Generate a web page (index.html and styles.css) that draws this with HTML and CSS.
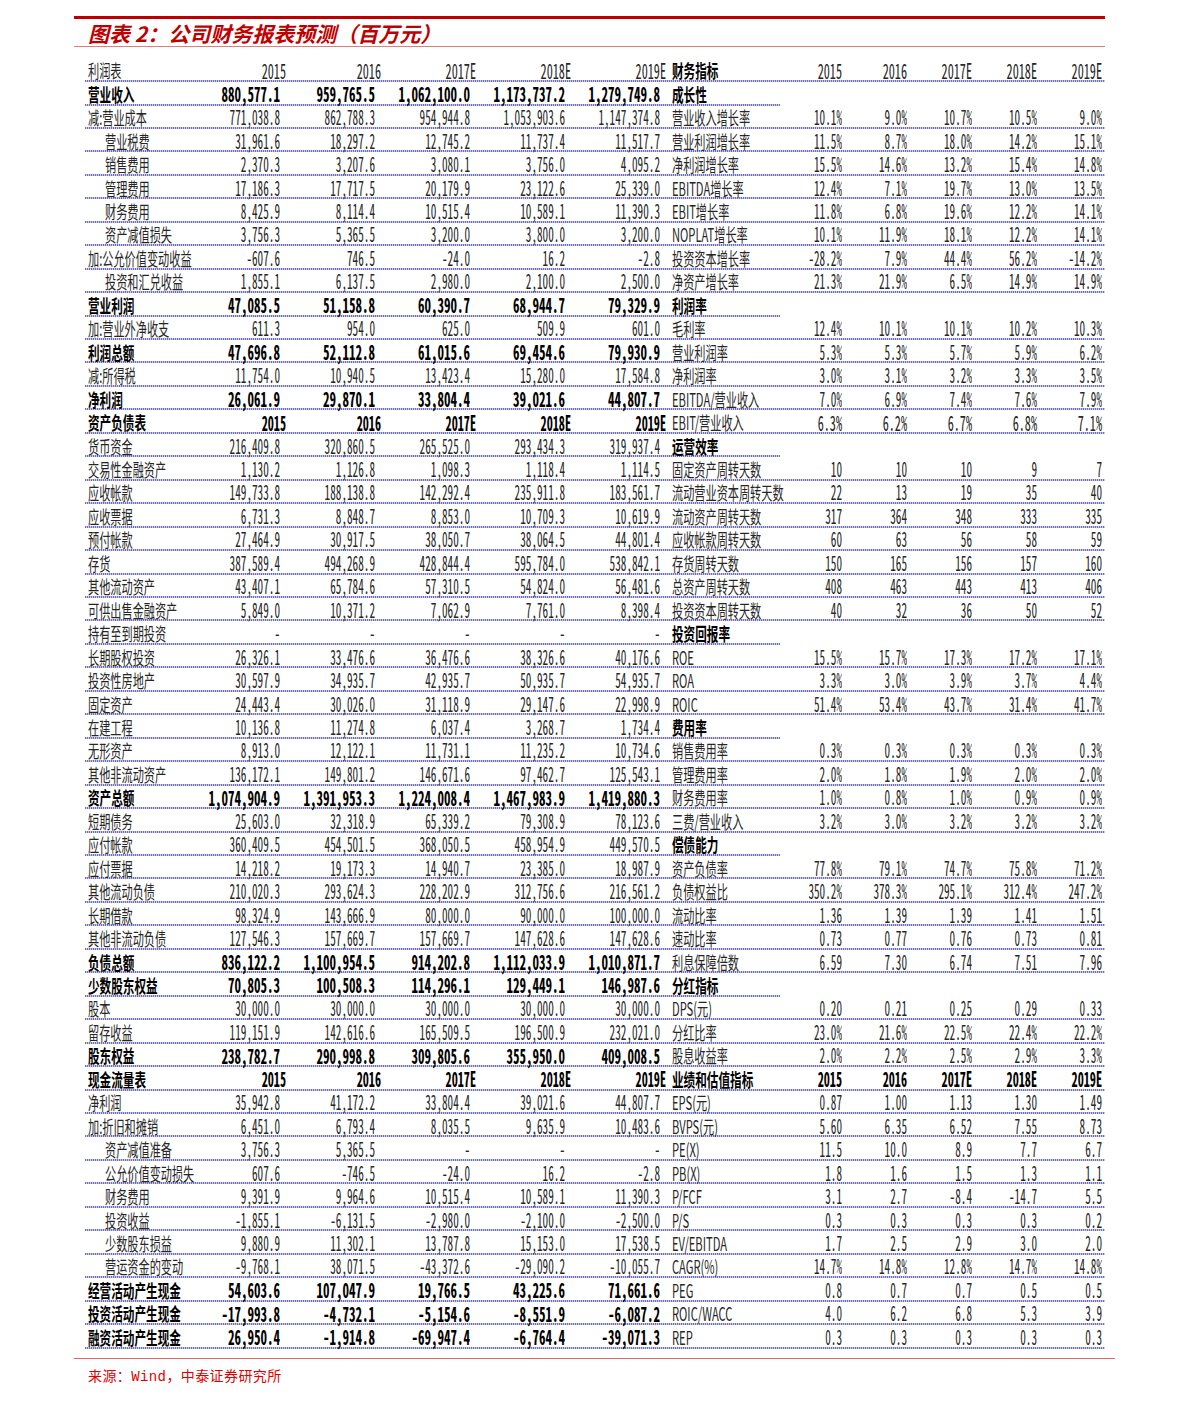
FILE: index.html
```html
<!DOCTYPE html>
<html lang="zh-CN">
<head>
<meta charset="utf-8">
<title>公司财务报表预测</title>
<link rel="stylesheet" href="styles.css">
</head>
<body>
<div class="page">
  <div class="topline"></div>
  <div class="title">图表 2：公司财务报表预测（百万元）</div>
  <div class="sheet">
    <div class="r h"><div class="l">利润表</div><div class="v">2015</div><div class="v">2016</div><div class="v">2017E</div><div class="v">2018E</div><div class="v">2019E</div><div class="rl k">财务指标</div><div class="rv">2015</div><div class="rv">2016</div><div class="rv">2017E</div><div class="rv">2018E</div><div class="rv">2019E</div></div>
    <div class="r b s"><div class="l">营业收入</div><div class="v">880,577.1</div><div class="v">959,765.5</div><div class="v">1,062,100.0</div><div class="v">1,173,737.2</div><div class="v">1,279,749.8</div><div class="rl k">成长性</div></div>
    <div class="r"><div class="l">减:营业成本</div><div class="v">771,038.8</div><div class="v">862,788.3</div><div class="v">954,944.8</div><div class="v">1,053,903.6</div><div class="v">1,147,374.8</div><div class="rl">营业收入增长率</div><div class="rv">10.1%</div><div class="rv">9.0%</div><div class="rv">10.7%</div><div class="rv">10.5%</div><div class="rv">9.0%</div></div>
    <div class="r"><div class="l i">营业税费</div><div class="v">31,961.6</div><div class="v">18,297.2</div><div class="v">12,745.2</div><div class="v">11,737.4</div><div class="v">11,517.7</div><div class="rl">营业利润增长率</div><div class="rv">11.5%</div><div class="rv">8.7%</div><div class="rv">18.0%</div><div class="rv">14.2%</div><div class="rv">15.1%</div></div>
    <div class="r"><div class="l i">销售费用</div><div class="v">2,370.3</div><div class="v">3,207.6</div><div class="v">3,080.1</div><div class="v">3,756.0</div><div class="v">4,095.2</div><div class="rl">净利润增长率</div><div class="rv">15.5%</div><div class="rv">14.6%</div><div class="rv">13.2%</div><div class="rv">15.4%</div><div class="rv">14.8%</div></div>
    <div class="r"><div class="l i">管理费用</div><div class="v">17,186.3</div><div class="v">17,717.5</div><div class="v">20,179.9</div><div class="v">23,122.6</div><div class="v">25,339.0</div><div class="rl">EBITDA增长率</div><div class="rv">12.4%</div><div class="rv">7.1%</div><div class="rv">19.7%</div><div class="rv">13.0%</div><div class="rv">13.5%</div></div>
    <div class="r"><div class="l i">财务费用</div><div class="v">8,425.9</div><div class="v">8,114.4</div><div class="v">10,515.4</div><div class="v">10,589.1</div><div class="v">11,390.3</div><div class="rl">EBIT增长率</div><div class="rv">11.8%</div><div class="rv">6.8%</div><div class="rv">19.6%</div><div class="rv">12.2%</div><div class="rv">14.1%</div></div>
    <div class="r"><div class="l i">资产减值损失</div><div class="v">3,756.3</div><div class="v">5,365.5</div><div class="v">3,200.0</div><div class="v">3,800.0</div><div class="v">3,200.0</div><div class="rl">NOPLAT增长率</div><div class="rv">10.1%</div><div class="rv">11.9%</div><div class="rv">18.1%</div><div class="rv">12.2%</div><div class="rv">14.1%</div></div>
    <div class="r"><div class="l">加:公允价值变动收益</div><div class="v">-607.6</div><div class="v">746.5</div><div class="v">-24.0</div><div class="v">16.2</div><div class="v">-2.8</div><div class="rl">投资资本增长率</div><div class="rv">-28.2%</div><div class="rv">7.9%</div><div class="rv">44.4%</div><div class="rv">56.2%</div><div class="rv">-14.2%</div></div>
    <div class="r"><div class="l i">投资和汇兑收益</div><div class="v">1,855.1</div><div class="v">6,137.5</div><div class="v">2,980.0</div><div class="v">2,100.0</div><div class="v">2,500.0</div><div class="rl">净资产增长率</div><div class="rv">21.3%</div><div class="rv">21.9%</div><div class="rv">6.5%</div><div class="rv">14.9%</div><div class="rv">14.9%</div></div>
    <div class="r b s"><div class="l">营业利润</div><div class="v">47,085.5</div><div class="v">51,158.8</div><div class="v">60,390.7</div><div class="v">68,944.7</div><div class="v">79,329.9</div><div class="rl k">利润率</div></div>
    <div class="r"><div class="l">加:营业外净收支</div><div class="v">611.3</div><div class="v">954.0</div><div class="v">625.0</div><div class="v">509.9</div><div class="v">601.0</div><div class="rl">毛利率</div><div class="rv">12.4%</div><div class="rv">10.1%</div><div class="rv">10.1%</div><div class="rv">10.2%</div><div class="rv">10.3%</div></div>
    <div class="r b"><div class="l">利润总额</div><div class="v">47,696.8</div><div class="v">52,112.8</div><div class="v">61,015.6</div><div class="v">69,454.6</div><div class="v">79,930.9</div><div class="rl">营业利润率</div><div class="rv">5.3%</div><div class="rv">5.3%</div><div class="rv">5.7%</div><div class="rv">5.9%</div><div class="rv">6.2%</div></div>
    <div class="r"><div class="l">减:所得税</div><div class="v">11,754.0</div><div class="v">10,940.5</div><div class="v">13,423.4</div><div class="v">15,280.0</div><div class="v">17,584.8</div><div class="rl">净利润率</div><div class="rv">3.0%</div><div class="rv">3.1%</div><div class="rv">3.2%</div><div class="rv">3.3%</div><div class="rv">3.5%</div></div>
    <div class="r b"><div class="l">净利润</div><div class="v">26,061.9</div><div class="v">29,870.1</div><div class="v">33,804.4</div><div class="v">39,021.6</div><div class="v">44,807.7</div><div class="rl">EBITDA/营业收入</div><div class="rv">7.0%</div><div class="rv">6.9%</div><div class="rv">7.4%</div><div class="rv">7.6%</div><div class="rv">7.9%</div></div>
    <div class="r b h"><div class="l">资产负债表</div><div class="v">2015</div><div class="v">2016</div><div class="v">2017E</div><div class="v">2018E</div><div class="v">2019E</div><div class="rl">EBIT/营业收入</div><div class="rv">6.3%</div><div class="rv">6.2%</div><div class="rv">6.7%</div><div class="rv">6.8%</div><div class="rv">7.1%</div></div>
    <div class="r s"><div class="l">货币资金</div><div class="v">216,409.8</div><div class="v">320,860.5</div><div class="v">265,525.0</div><div class="v">293,434.3</div><div class="v">319,937.4</div><div class="rl k">运营效率</div></div>
    <div class="r"><div class="l">交易性金融资产</div><div class="v">1,130.2</div><div class="v">1,126.8</div><div class="v">1,098.3</div><div class="v">1,118.4</div><div class="v">1,114.5</div><div class="rl">固定资产周转天数</div><div class="rv">10</div><div class="rv">10</div><div class="rv">10</div><div class="rv">9</div><div class="rv">7</div></div>
    <div class="r"><div class="l">应收帐款</div><div class="v">149,733.8</div><div class="v">188,138.8</div><div class="v">142,292.4</div><div class="v">235,911.8</div><div class="v">183,561.7</div><div class="rl">流动营业资本周转天数</div><div class="rv">22</div><div class="rv">13</div><div class="rv">19</div><div class="rv">35</div><div class="rv">40</div></div>
    <div class="r"><div class="l">应收票据</div><div class="v">6,731.3</div><div class="v">8,848.7</div><div class="v">8,853.0</div><div class="v">10,709.3</div><div class="v">10,619.9</div><div class="rl">流动资产周转天数</div><div class="rv">317</div><div class="rv">364</div><div class="rv">348</div><div class="rv">333</div><div class="rv">335</div></div>
    <div class="r"><div class="l">预付帐款</div><div class="v">27,464.9</div><div class="v">30,917.5</div><div class="v">38,050.7</div><div class="v">38,064.5</div><div class="v">44,801.4</div><div class="rl">应收帐款周转天数</div><div class="rv">60</div><div class="rv">63</div><div class="rv">56</div><div class="rv">58</div><div class="rv">59</div></div>
    <div class="r"><div class="l">存货</div><div class="v">387,589.4</div><div class="v">494,268.9</div><div class="v">428,844.4</div><div class="v">595,784.0</div><div class="v">538,842.1</div><div class="rl">存货周转天数</div><div class="rv">150</div><div class="rv">165</div><div class="rv">156</div><div class="rv">157</div><div class="rv">160</div></div>
    <div class="r"><div class="l">其他流动资产</div><div class="v">43,407.1</div><div class="v">65,784.6</div><div class="v">57,310.5</div><div class="v">54,824.0</div><div class="v">56,481.6</div><div class="rl">总资产周转天数</div><div class="rv">408</div><div class="rv">463</div><div class="rv">443</div><div class="rv">413</div><div class="rv">406</div></div>
    <div class="r"><div class="l">可供出售金融资产</div><div class="v">5,849.0</div><div class="v">10,371.2</div><div class="v">7,062.9</div><div class="v">7,761.0</div><div class="v">8,398.4</div><div class="rl">投资资本周转天数</div><div class="rv">40</div><div class="rv">32</div><div class="rv">36</div><div class="rv">50</div><div class="rv">52</div></div>
    <div class="r s"><div class="l">持有至到期投资</div><div class="v">-</div><div class="v">-</div><div class="v">-</div><div class="v">-</div><div class="v">-</div><div class="rl k">投资回报率</div></div>
    <div class="r"><div class="l">长期股权投资</div><div class="v">26,326.1</div><div class="v">33,476.6</div><div class="v">36,476.6</div><div class="v">38,326.6</div><div class="v">40,176.6</div><div class="rl">ROE</div><div class="rv">15.5%</div><div class="rv">15.7%</div><div class="rv">17.3%</div><div class="rv">17.2%</div><div class="rv">17.1%</div></div>
    <div class="r"><div class="l">投资性房地产</div><div class="v">30,597.9</div><div class="v">34,935.7</div><div class="v">42,935.7</div><div class="v">50,935.7</div><div class="v">54,935.7</div><div class="rl">ROA</div><div class="rv">3.3%</div><div class="rv">3.0%</div><div class="rv">3.9%</div><div class="rv">3.7%</div><div class="rv">4.4%</div></div>
    <div class="r"><div class="l">固定资产</div><div class="v">24,443.4</div><div class="v">30,026.0</div><div class="v">31,118.9</div><div class="v">29,147.6</div><div class="v">22,998.9</div><div class="rl">ROIC</div><div class="rv">51.4%</div><div class="rv">53.4%</div><div class="rv">43.7%</div><div class="rv">31.4%</div><div class="rv">41.7%</div></div>
    <div class="r s"><div class="l">在建工程</div><div class="v">10,136.8</div><div class="v">11,274.8</div><div class="v">6,037.4</div><div class="v">3,268.7</div><div class="v">1,734.4</div><div class="rl k">费用率</div></div>
    <div class="r"><div class="l">无形资产</div><div class="v">8,913.0</div><div class="v">12,122.1</div><div class="v">11,731.1</div><div class="v">11,235.2</div><div class="v">10,734.6</div><div class="rl">销售费用率</div><div class="rv">0.3%</div><div class="rv">0.3%</div><div class="rv">0.3%</div><div class="rv">0.3%</div><div class="rv">0.3%</div></div>
    <div class="r"><div class="l">其他非流动资产</div><div class="v">136,172.1</div><div class="v">149,801.2</div><div class="v">146,671.6</div><div class="v">97,462.7</div><div class="v">125,543.1</div><div class="rl">管理费用率</div><div class="rv">2.0%</div><div class="rv">1.8%</div><div class="rv">1.9%</div><div class="rv">2.0%</div><div class="rv">2.0%</div></div>
    <div class="r b"><div class="l">资产总额</div><div class="v">1,074,904.9</div><div class="v">1,391,953.3</div><div class="v">1,224,008.4</div><div class="v">1,467,983.9</div><div class="v">1,419,880.3</div><div class="rl">财务费用率</div><div class="rv">1.0%</div><div class="rv">0.8%</div><div class="rv">1.0%</div><div class="rv">0.9%</div><div class="rv">0.9%</div></div>
    <div class="r"><div class="l">短期债务</div><div class="v">25,603.0</div><div class="v">32,318.9</div><div class="v">65,339.2</div><div class="v">79,308.9</div><div class="v">78,123.6</div><div class="rl">三费/营业收入</div><div class="rv">3.2%</div><div class="rv">3.0%</div><div class="rv">3.2%</div><div class="rv">3.2%</div><div class="rv">3.2%</div></div>
    <div class="r s"><div class="l">应付帐款</div><div class="v">360,409.5</div><div class="v">454,501.5</div><div class="v">368,050.5</div><div class="v">458,954.9</div><div class="v">449,570.5</div><div class="rl k">偿债能力</div></div>
    <div class="r"><div class="l">应付票据</div><div class="v">14,218.2</div><div class="v">19,173.3</div><div class="v">14,940.7</div><div class="v">23,385.0</div><div class="v">18,987.9</div><div class="rl">资产负债率</div><div class="rv">77.8%</div><div class="rv">79.1%</div><div class="rv">74.7%</div><div class="rv">75.8%</div><div class="rv">71.2%</div></div>
    <div class="r"><div class="l">其他流动负债</div><div class="v">210,020.3</div><div class="v">293,624.3</div><div class="v">228,202.9</div><div class="v">312,756.6</div><div class="v">216,561.2</div><div class="rl">负债权益比</div><div class="rv">350.2%</div><div class="rv">378.3%</div><div class="rv">295.1%</div><div class="rv">312.4%</div><div class="rv">247.2%</div></div>
    <div class="r"><div class="l">长期借款</div><div class="v">98,324.9</div><div class="v">143,666.9</div><div class="v">80,000.0</div><div class="v">90,000.0</div><div class="v">100,000.0</div><div class="rl">流动比率</div><div class="rv">1.36</div><div class="rv">1.39</div><div class="rv">1.39</div><div class="rv">1.41</div><div class="rv">1.51</div></div>
    <div class="r"><div class="l">其他非流动负债</div><div class="v">127,546.3</div><div class="v">157,669.7</div><div class="v">157,669.7</div><div class="v">147,628.6</div><div class="v">147,628.6</div><div class="rl">速动比率</div><div class="rv">0.73</div><div class="rv">0.77</div><div class="rv">0.76</div><div class="rv">0.73</div><div class="rv">0.81</div></div>
    <div class="r b"><div class="l">负债总额</div><div class="v">836,122.2</div><div class="v">1,100,954.5</div><div class="v">914,202.8</div><div class="v">1,112,033.9</div><div class="v">1,010,871.7</div><div class="rl">利息保障倍数</div><div class="rv">6.59</div><div class="rv">7.30</div><div class="rv">6.74</div><div class="rv">7.51</div><div class="rv">7.96</div></div>
    <div class="r b s"><div class="l">少数股东权益</div><div class="v">70,805.3</div><div class="v">100,508.3</div><div class="v">114,296.1</div><div class="v">129,449.1</div><div class="v">146,987.6</div><div class="rl k">分红指标</div></div>
    <div class="r"><div class="l">股本</div><div class="v">30,000.0</div><div class="v">30,000.0</div><div class="v">30,000.0</div><div class="v">30,000.0</div><div class="v">30,000.0</div><div class="rl">DPS(元)</div><div class="rv">0.20</div><div class="rv">0.21</div><div class="rv">0.25</div><div class="rv">0.29</div><div class="rv">0.33</div></div>
    <div class="r"><div class="l">留存收益</div><div class="v">119,151.9</div><div class="v">142,616.6</div><div class="v">165,509.5</div><div class="v">196,500.9</div><div class="v">232,021.0</div><div class="rl">分红比率</div><div class="rv">23.0%</div><div class="rv">21.6%</div><div class="rv">22.5%</div><div class="rv">22.4%</div><div class="rv">22.2%</div></div>
    <div class="r b"><div class="l">股东权益</div><div class="v">238,782.7</div><div class="v">290,998.8</div><div class="v">309,805.6</div><div class="v">355,950.0</div><div class="v">409,008.5</div><div class="rl">股息收益率</div><div class="rv">2.0%</div><div class="rv">2.2%</div><div class="rv">2.5%</div><div class="rv">2.9%</div><div class="rv">3.3%</div></div>
    <div class="r b h hb"><div class="l">现金流量表</div><div class="v">2015</div><div class="v">2016</div><div class="v">2017E</div><div class="v">2018E</div><div class="v">2019E</div><div class="rl k">业绩和估值指标</div><div class="rv">2015</div><div class="rv">2016</div><div class="rv">2017E</div><div class="rv">2018E</div><div class="rv">2019E</div></div>
    <div class="r"><div class="l">净利润</div><div class="v">35,942.8</div><div class="v">41,172.2</div><div class="v">33,804.4</div><div class="v">39,021.6</div><div class="v">44,807.7</div><div class="rl">EPS(元)</div><div class="rv">0.87</div><div class="rv">1.00</div><div class="rv">1.13</div><div class="rv">1.30</div><div class="rv">1.49</div></div>
    <div class="r"><div class="l">加:折旧和摊销</div><div class="v">6,451.0</div><div class="v">6,793.4</div><div class="v">8,035.5</div><div class="v">9,635.9</div><div class="v">10,483.6</div><div class="rl">BVPS(元)</div><div class="rv">5.60</div><div class="rv">6.35</div><div class="rv">6.52</div><div class="rv">7.55</div><div class="rv">8.73</div></div>
    <div class="r"><div class="l i">资产减值准备</div><div class="v">3,756.3</div><div class="v">5,365.5</div><div class="v">-</div><div class="v">-</div><div class="v">-</div><div class="rl">PE(X)</div><div class="rv">11.5</div><div class="rv">10.0</div><div class="rv">8.9</div><div class="rv">7.7</div><div class="rv">6.7</div></div>
    <div class="r"><div class="l i">公允价值变动损失</div><div class="v">607.6</div><div class="v">-746.5</div><div class="v">-24.0</div><div class="v">16.2</div><div class="v">-2.8</div><div class="rl">PB(X)</div><div class="rv">1.8</div><div class="rv">1.6</div><div class="rv">1.5</div><div class="rv">1.3</div><div class="rv">1.1</div></div>
    <div class="r"><div class="l i">财务费用</div><div class="v">9,391.9</div><div class="v">9,964.6</div><div class="v">10,515.4</div><div class="v">10,589.1</div><div class="v">11,390.3</div><div class="rl">P/FCF</div><div class="rv">3.1</div><div class="rv">2.7</div><div class="rv">-8.4</div><div class="rv">-14.7</div><div class="rv">5.5</div></div>
    <div class="r"><div class="l i">投资收益</div><div class="v">-1,855.1</div><div class="v">-6,131.5</div><div class="v">-2,980.0</div><div class="v">-2,100.0</div><div class="v">-2,500.0</div><div class="rl">P/S</div><div class="rv">0.3</div><div class="rv">0.3</div><div class="rv">0.3</div><div class="rv">0.3</div><div class="rv">0.2</div></div>
    <div class="r"><div class="l i">少数股东损益</div><div class="v">9,880.9</div><div class="v">11,302.1</div><div class="v">13,787.8</div><div class="v">15,153.0</div><div class="v">17,538.5</div><div class="rl">EV/EBITDA</div><div class="rv">1.7</div><div class="rv">2.5</div><div class="rv">2.9</div><div class="rv">3.0</div><div class="rv">2.0</div></div>
    <div class="r"><div class="l i">营运资金的变动</div><div class="v">-9,768.1</div><div class="v">38,071.5</div><div class="v">-43,372.6</div><div class="v">-29,090.2</div><div class="v">-10,055.7</div><div class="rl">CAGR(%)</div><div class="rv">14.7%</div><div class="rv">14.8%</div><div class="rv">12.8%</div><div class="rv">14.7%</div><div class="rv">14.8%</div></div>
    <div class="r b"><div class="l">经营活动产生现金</div><div class="v">54,603.6</div><div class="v">107,047.9</div><div class="v">19,766.5</div><div class="v">43,225.6</div><div class="v">71,661.6</div><div class="rl">PEG</div><div class="rv">0.8</div><div class="rv">0.7</div><div class="rv">0.7</div><div class="rv">0.5</div><div class="rv">0.5</div></div>
    <div class="r b"><div class="l">投资活动产生现金</div><div class="v">-17,993.8</div><div class="v">-4,732.1</div><div class="v">-5,154.6</div><div class="v">-8,551.9</div><div class="v">-6,087.2</div><div class="rl">ROIC/WACC</div><div class="rv">4.0</div><div class="rv">6.2</div><div class="rv">6.8</div><div class="rv">5.3</div><div class="rv">3.9</div></div>
    <div class="r b"><div class="l">融资活动产生现金</div><div class="v">26,950.4</div><div class="v">-1,914.8</div><div class="v">-69,947.4</div><div class="v">-6,764.4</div><div class="v">-39,071.3</div><div class="rl">REP</div><div class="rv">0.3</div><div class="rv">0.3</div><div class="rv">0.3</div><div class="rv">0.3</div><div class="rv">0.3</div></div>
  </div>
  <div class="footline"></div>
  <div class="foot">来源：Wind，中泰证券研究所</div>
</div>
</body>
</html>
```

FILE: styles.css
```css
* { box-sizing: border-box; }
body { margin: 0; background: #fff; }

.page { width: 1031px; margin-left: 74px; padding-top: 16px; }

.topline { height: 3px; background: #c00000; }

.title {
  height: 28px;
  border-bottom: 1px solid #e27b7b;
  padding-left: 14px;
  display: flex;
  align-items: center;
  font-family: "Noto Sans CJK SC", sans-serif;
  font-weight: 700;
  font-style: italic;
  font-size: 21px;
  color: #c00000;
}

.sheet { margin: 11.6px 0 0 11px; width: 1020px; }

.r {
  display: grid;
  grid-template-columns: 106px repeat(5, 95px) 114px repeat(5, 65px);
  height: 23.46px;
  background: repeating-linear-gradient(90deg, #6f6fb5 0 1px, #c9c9e2 1px 2px) left bottom / 100% 2px no-repeat;
  color: #262626;
}
.r.s { background-size: 695px 2px; }

.l, .rl {
  display: flex;
  align-items: center;
  white-space: nowrap;
  font-family: "Noto Sans CJK SC", sans-serif;
  font-size: 18px;
  line-height: 1;
  transform: scaleX(.62);
  transform-origin: left center;
}
.l { margin-left: 3px; }
.l.i { margin-left: 20px; }
.rl { margin-left: 6px; }

.v, .rv {
  display: flex;
  align-items: center;
  justify-content: flex-end;
  white-space: nowrap;
  font-family: "Noto Sans Mono CJK SC", "Liberation Mono", monospace;
  font-size: 20px;
  line-height: 1;
  transform: scaleX(.56);
  transform-origin: right center;
}
.v { margin-right: 6px; }
.rv { margin-right: 3px; }
.h .v { margin-right: 0; }
.h .v, .h .rv { font-size: 21px; transform: scaleX(.58); }

.b .l { font-weight: 700; color: #000; transform: scaleX(.645); }
.b .v { font-weight: 700; color: #000; font-size: 21px; transform: scaleX(.62); }
.b.h .v { transform: scaleX(.58); }
.rl.k { font-weight: 700; color: #000; transform: scaleX(.645); }
.hb .rv { font-weight: 700; color: #000; }

.footline { margin-top: 9px; width: 1041px; height: 1px; background: #e06565; }

.foot {
  height: 32px;
  padding-left: 14px;
  display: flex;
  align-items: center;
  font-family: "Liberation Mono", "Noto Sans CJK SC", monospace;
  font-size: 14px;
  letter-spacing: .4px;
  color: #e00000;
}
```
